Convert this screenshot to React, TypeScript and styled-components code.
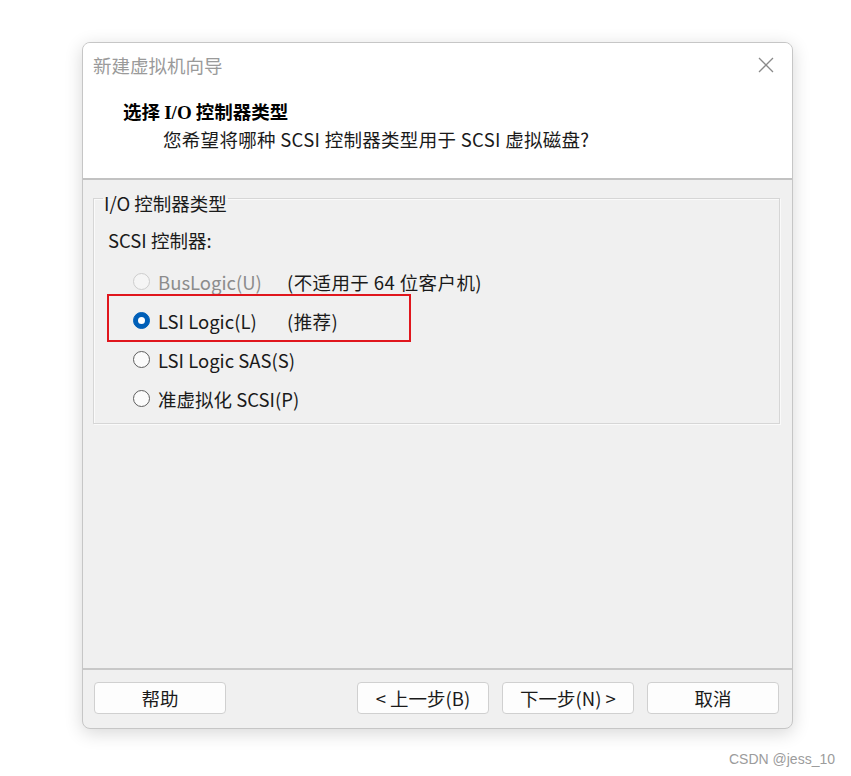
import React from "react";
import styled, { createGlobalStyle } from "styled-components";

const GlobalStyle = createGlobalStyle`
  html, body {
    margin: 0;
    padding: 0;
    background: #ffffff;
  }
  * {
    box-sizing: border-box;
  }
`;

const Page = styled.div`
  width: 851px;
  height: 776px;
  padding: 42px 0 0 82px;
  font-family: "Noto Sans CJK SC", "Noto Sans", sans-serif;
  color: #1a1a1a;
  overflow: hidden;
`;

const Window = styled.div`
  width: 711px;
  height: 687px;
  display: flex;
  flex-direction: column;
  border: 1px solid #c6c6c6;
  border-radius: 8px;
  overflow: hidden;
  background: #f0f0f0;
  box-shadow: 0 4px 18px rgba(0, 0, 0, 0.16);
`;

const Header = styled.div`
  height: 137px;
  background: #ffffff;
  border-bottom: 2px solid #c2c2c2;
  display: flex;
  flex-direction: column;
`;

const TitleBar = styled.div`
  height: 46px;
  display: flex;
  align-items: center;
  justify-content: space-between;
  padding: 0 17px 2px 10px;
`;

const WindowTitle = styled.span`
  font-size: 18.5px;
  line-height: 24px;
  color: #9a9a9a;
`;

const CloseButton = styled.button`
  width: 18px;
  height: 18px;
  padding: 0;
  border: none;
  background: transparent;
  display: flex;
  align-items: center;
  justify-content: center;
`;

const Heading = styled.div`
  padding: 9px 0 0 40px;
`;

const PageTitle = styled.div`
  font-size: 18.5px;
  line-height: 26px;
  font-weight: 700;
  color: #000;
  .latin {
    font-family: "Liberation Serif", serif;
    font-size: 19px;
  }
`;

const PageSubtitle = styled.div`
  padding-left: 40px;
  font-size: 18.5px;
  line-height: 26px;
  letter-spacing: 0.3px;
`;

const Body = styled.div`
  flex: 1;
  padding: 3px 12px 0 10px;
`;

const GroupBox = styled.fieldset`
  margin: 0;
  padding: 0 0 5px 14px;
  border: 1px solid #d6d6d6;
  box-shadow: inset 1px 1px 0 #fafafa, 1px 1px 0 #fafafa;
`;

const GroupLegend = styled.legend`
  margin-left: -5px;
  padding: 10px 1px 0;
  font-size: 18.5px;
  line-height: 20px;
`;

const FieldLabel = styled.div`
  margin-top: 15px;
  font-size: 18.5px;
  line-height: 24px;
`;

const OptionList = styled.div`
  margin-top: 10px;
  display: flex;
  flex-direction: column;
`;

const OptionRow = styled.label<{ $highlight?: boolean }>`
  position: relative;
  height: 39px;
  padding-left: 25px;
  display: grid;
  grid-template-columns: 17px 121px auto;
  column-gap: 8px;
  align-items: center;
  font-size: 18.5px;

  &::after {
    content: "";
    display: ${(p) => (p.$highlight ? "block" : "none")};
    position: absolute;
    left: -1px;
    top: -7px;
    width: 300px;
    height: 44px;
    border: 2px solid #e0161d;
    pointer-events: none;
  }
`;

const RadioCircle = styled.span<{ $checked?: boolean; $disabled?: boolean }>`
  width: 17px;
  height: 17px;
  border-radius: 50%;
  display: flex;
  align-items: center;
  justify-content: center;
  border: 1px solid
    ${(p) => (p.$checked ? "#005fb8" : p.$disabled ? "#cdcdcd" : "#5e5e5e")};
  background: ${(p) =>
    p.$checked ? "#005fb8" : p.$disabled ? "#f5f5f5" : "#fbfbfb"};

  &::before {
    content: "";
    display: ${(p) => (p.$checked ? "block" : "none")};
    width: 7px;
    height: 7px;
    border-radius: 50%;
    background: #ffffff;
  }
`;

const OptionText = styled.span<{ $disabled?: boolean }>`
  color: ${(p) => (p.$disabled ? "#8c8c8c" : "#1a1a1a")};
  white-space: nowrap;
`;

const OptionNote = styled.span`
  white-space: nowrap;
  letter-spacing: 0.4px;
`;

const Footer = styled.div`
  height: 60px;
  border-top: 2px solid #c8c8c8;
  padding: 12px 13px 0 11px;
  display: flex;
  justify-content: space-between;
  align-items: flex-start;
`;

const ButtonGroup = styled.div`
  display: flex;
  gap: 13px;
`;

const Button = styled.button`
  width: 132px;
  height: 32px;
  padding: 0;
  border: 1px solid #d0d0d0;
  border-radius: 4px;
  background: #fdfdfd;
  font-family: "Noto Sans CJK SC", "Noto Sans", sans-serif;
  font-size: 18.5px;
  line-height: 30px;
  color: #1a1a1a;
`;

const Watermark = styled.div`
  margin-top: 22px;
  width: 753px;
  text-align: right;
  font-family: "Liberation Sans", Arial, sans-serif;
  font-size: 14px;
  color: #9c9c9c;
`;

const CloseIcon = () => (
  <svg width="16" height="16" viewBox="0 0 16 16">
    <path d="M1 1 L15 15 M15 1 L1 15" stroke="#8a8a8a" strokeWidth="1.3" fill="none" />
  </svg>
);

type Option = {
  label: string;
  note?: string;
  checked?: boolean;
  disabled?: boolean;
  highlight?: boolean;
};

const options: Option[] = [
  { label: "BusLogic(U)", note: "(不适用于 64 位客户机)", disabled: true },
  { label: "LSI Logic(L)", note: "(推荐)", checked: true, highlight: true },
  { label: "LSI Logic SAS(S)" },
  { label: "准虚拟化 SCSI(P)" },
];

const App = () => {
  return (
    <>
      <GlobalStyle />
      <Page>
        <Window>
          <Header>
            <TitleBar>
              <WindowTitle>新建虚拟机向导</WindowTitle>
              <CloseButton aria-label="关闭">
                <CloseIcon />
              </CloseButton>
            </TitleBar>
            <Heading>
              <PageTitle>
                选择 <span className="latin">I/O</span> 控制器类型
              </PageTitle>
              <PageSubtitle>您希望将哪种 SCSI 控制器类型用于 SCSI 虚拟磁盘?</PageSubtitle>
            </Heading>
          </Header>
          <Body>
            <GroupBox>
              <GroupLegend>I/O 控制器类型</GroupLegend>
              <FieldLabel>SCSI 控制器:</FieldLabel>
              <OptionList>
                {options.map((o) => (
                  <OptionRow key={o.label} $highlight={o.highlight}>
                    <RadioCircle $checked={o.checked} $disabled={o.disabled} />
                    <OptionText $disabled={o.disabled}>{o.label}</OptionText>
                    {o.note ? <OptionNote>{o.note}</OptionNote> : <span />}
                  </OptionRow>
                ))}
              </OptionList>
            </GroupBox>
          </Body>
          <Footer>
            <Button>帮助</Button>
            <ButtonGroup>
              <Button>&lt; 上一步(B)</Button>
              <Button>下一步(N) &gt;</Button>
              <Button>取消</Button>
            </ButtonGroup>
          </Footer>
        </Window>
        <Watermark>CSDN @jess_10</Watermark>
      </Page>
    </>
  );
};

export default App;
